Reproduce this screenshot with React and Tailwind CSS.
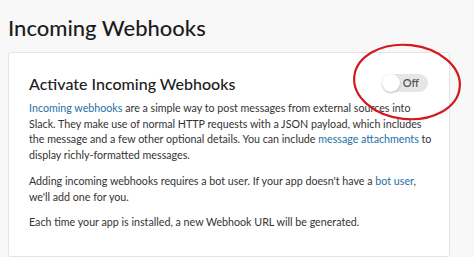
export default function App() {
    return (
        <div className="relative h-[257px] w-[474px] overflow-hidden bg-[#f8f8f8] font-['Lato',sans-serif] text-[#1d1c1d]">
            <h1 className="pl-2 pt-[14px] text-[22px] leading-[28px] font-medium">Incoming Webhooks</h1>

            <div className="ml-2 mt-[10px] w-[442px] rounded-[3px] border border-[#e4e4e4] bg-white pl-[20px] pr-[20px] pt-[19px] pb-[26px] shadow-[0_1px_2px_rgba(0,0,0,0.04)]">
                <div className="flex items-center justify-between">
                    <h2 className="text-[16px] leading-[24px] font-medium">Activate Incoming Webhooks</h2>
                    <button className="relative -mt-[2px] mr-[1px] flex h-[18px] w-[46px] items-center justify-end rounded-full bg-[#e6e6e6] pr-[9px] text-[11px] font-semibold text-[#555]">
                        <span className="absolute left-0 top-0 h-[18px] w-[18px] rounded-full bg-white shadow-[0_1px_2px_rgba(0,0,0,0.25)]" />
                        Off
                    </button>
                </div>

                <div className="mt-[4px] whitespace-nowrap text-[10.7px] leading-[15.5px] text-[#333]">
                    <p>
                        <span className="text-[#1d6fa5]">Incoming webhooks</span> are a simple way to post messages from external sources into
                        <br />
                        Slack. They make use of normal HTTP requests with a JSON payload, which includes
                        <br />
                        the message and a few other optional details. You can include{" "}
                        <span className="text-[#1d6fa5]">message attachments</span> to
                        <br />
                        display richly-formatted messages.
                    </p>
                    <p className="mt-[11px]">
                        Adding incoming webhooks requires a bot user. If your app doesn't have a{" "}
                        <span className="text-[#1d6fa5]">bot user</span>,
                        <br />
                        we'll add one for you.
                    </p>
                    <p className="mt-[10px]">Each time your app is installed, a new Webhook URL will be generated.</p>
                </div>
            </div>

            <svg className="pointer-events-none absolute left-0 top-0" width="474" height="257">
                <ellipse cx="407" cy="82" rx="53" ry="37" fill="none" stroke="#d3191c" strokeWidth="2.2" transform="rotate(6 407 82)" />
            </svg>
        </div>
    );
}
